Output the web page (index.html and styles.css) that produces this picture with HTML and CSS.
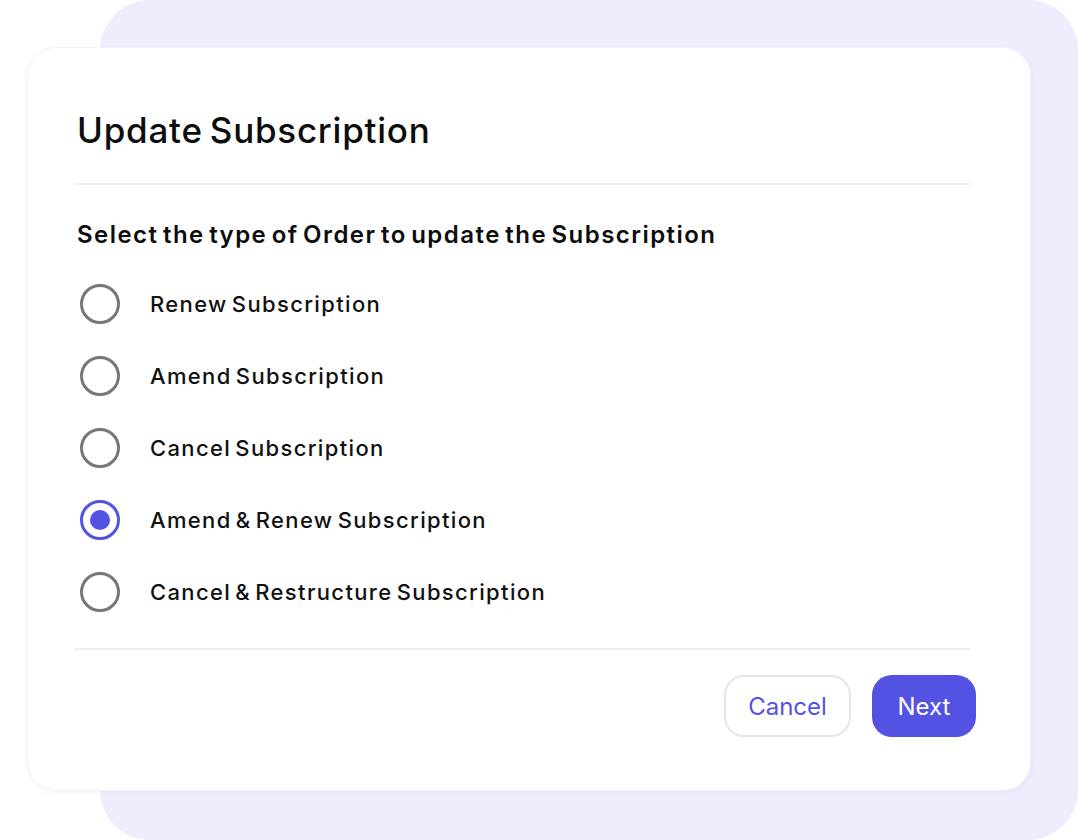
FILE: index.html
```html
<!DOCTYPE html>
<html lang="en">
<head>
<meta charset="utf-8">
<title>Update Subscription</title>
<link rel="stylesheet" href="styles.css">
</head>
<body>
<div class="backdrop">
  <div class="card">
    <h1 class="title">Update Subscription</h1>
    <div class="divider"></div>
    <p class="prompt">Select the type of Order to update the Subscription</p>
    <div class="options">
      <label class="option"><span class="radio"></span><span class="label">Renew Subscription</span></label>
      <label class="option"><span class="radio"></span><span class="label">Amend Subscription</span></label>
      <label class="option"><span class="radio"></span><span class="label">Cancel Subscription</span></label>
      <label class="option"><span class="radio radio-on"></span><span class="label">Amend &amp; Renew Subscription</span></label>
      <label class="option"><span class="radio"></span><span class="label">Cancel &amp; Restructure Subscription</span></label>
    </div>
    <div class="divider divider-bottom"></div>
    <div class="footer">
      <button class="btn btn-cancel">Cancel</button>
      <button class="btn btn-next">Next</button>
    </div>
  </div>
</div>
</body>
</html>
```
FILE: styles.css
```css
html, body {
  margin: 0;
  padding: 0;
  background: #ffffff;
  font-family: Inter, "Noto Sans", "Liberation Sans", sans-serif;
  color: #111111;
}
.backdrop {
  box-sizing: border-box;
  margin-left: 100px;
  width: 978px;
  height: 840px;
  padding-top: 48px;
  background: #eeedfd;
  border-radius: 50px;
}
.card {
  box-sizing: border-box;
  margin-left: -72px;
  width: 1002px;
  height: 742px;
  background: #ffffff;
  border-radius: 28px;
  box-shadow: 0 0 0 1px #f3f2fb, 0 2px 6px rgba(120, 110, 220, 0.08);
  padding: 60px 59px 0 46px;
  display: flex;
  flex-direction: column;
}
.title {
  margin: 0;
  padding-left: 3px;
  font-size: 35px;
  line-height: 44px;
  font-weight: 500;
  color: #0d0d0d;
  letter-spacing: 0.75px;
  word-spacing: -3px;
}
.divider {
  height: 2px;
  background: #efeef4;
  margin-top: 31px;
}
.prompt {
  margin: 34px 0 0 0;
  padding-left: 3px;
  font-size: 24px;
  line-height: 32px;
  font-weight: 600;
  color: #0d0d0d;
  letter-spacing: 1.45px;
  word-spacing: -3px;
}
.options {
  margin-top: 33px;
  display: flex;
  flex-direction: column;
  gap: 32px;
  padding-left: 6px;
}
.option {
  display: flex;
  align-items: center;
  gap: 30px;
  height: 40px;
}
.radio {
  box-sizing: border-box;
  width: 40px;
  height: 40px;
  border-radius: 50%;
  border: 3px solid #767676;
  display: flex;
  align-items: center;
  justify-content: center;
  flex: none;
}
.radio-on {
  border-color: #5452e3;
}
.radio-on::after {
  content: "";
  width: 20px;
  height: 20px;
  border-radius: 50%;
  background: #5452e3;
}
.label {
  font-size: 22px;
  font-weight: 500;
  color: #111111;
  letter-spacing: 1.35px;
  word-spacing: -3px;
}
.divider-bottom {
  margin-top: 36px;
}
.footer {
  margin-top: 25px;
  margin-right: -5px;
  display: flex;
  justify-content: flex-end;
  gap: 21px;
}
.btn {
  box-sizing: border-box;
  height: 62px;
  border-radius: 20px;
  font-family: inherit;
  font-size: 24px;
  font-weight: 400;
  cursor: pointer;
}
.btn-cancel {
  width: 127px;
  background: #ffffff;
  border: 2px solid #e6e6e6;
  color: #5452e3;
}
.btn-next {
  width: 104px;
  background: #5352e3;
  border: none;
  color: #ffffff;
}
```
